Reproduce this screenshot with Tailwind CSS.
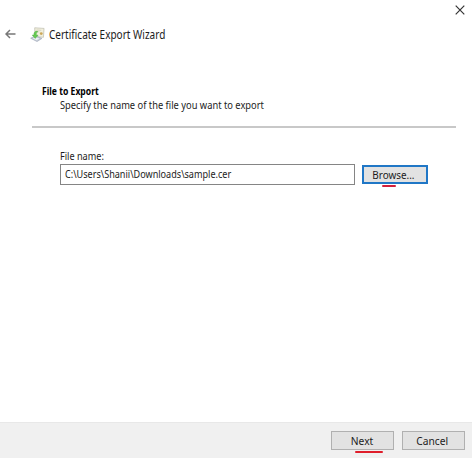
<!DOCTYPE html>
<html lang="en">
<head>
<meta charset="utf-8">
<title>Certificate Export Wizard</title>
<script src="https://cdn.jsdelivr.net/npm/@tailwindcss/browser@4"></script>
</head>
<body class="bg-white">
<main class="flex h-[459px] w-[474px] flex-col overflow-hidden bg-white font-['Noto_Sans','Open_Sans',sans-serif] text-[11px] leading-4 whitespace-nowrap text-[#1c1c1c]">
  <div class="flex h-[22px] justify-end pt-[5px] pr-[9px]">
    <svg class="size-[10px]" viewBox="0 0 10 10" fill="none" stroke="#333" stroke-width="1.2"><path d="M.7.7l8.6 8.6M9.3.7L.7 9.3"/></svg>
  </div>
  <header class="flex h-[26px] items-center pl-[5px]">
    <svg class="-mt-[2px] h-[10px] w-[11px]" viewBox="0 0 11 10" fill="none" stroke="#777" stroke-width="1.5"><path d="M10.5 5H1.2M5 1L1 5l4 4"/></svg>
    <svg class="-mt-[2px] ml-[14px] h-[15px] w-[15px]" viewBox="0 0 16 16">
      <path d="M5 .8l10 .7-.7 9.5-9-.8z" fill="#f1efdc" stroke="#b9b9a9" stroke-width=".7"/>
      <path d="M7 3.2l5 .3M7 5l3 .2" stroke="#c9c8b5" stroke-width=".8"/>
      <circle cx="12" cy="7" r="1.5" fill="#cba75a"/>
      <path d="M.7 12l5-2.6 7 2.8-5.2 3.3z" fill="#c7ced8" stroke="#929cae" stroke-width=".6"/>
      <path d="M3 12.2l3-1.4 4 1.5-3 1.8z" fill="#edf1f4"/>
      <path d="M7.5 4.3C5 4.5 4 6 4.1 8.6H2.3l3.3 3.6 3-3.6H6.7c0-2 .2-3 1.7-3.5z" fill="#65c952" stroke="#46a63b" stroke-width=".4"/>
    </svg>
    <h1 class="ml-[4px] origin-left scale-x-[.834] text-[12px]/4">Certificate Export Wizard</h1>
  </header>
  <section class="mt-[35px] h-[43px] pl-[42px]">
    <h2 class="origin-left scale-x-[.86] text-[10px] leading-[16px] font-bold text-black">File to Export</h2>
    <p class="-mt-[2px] pl-[18px]"><span class="inline-block origin-left scale-x-[.847]">Specify the name of the file you want to export</span></p>
  </section>
  <div class="ml-[32px] h-[2px] w-[424px] bg-[#c8c8c8]"></div>
  <section class="mt-[20px] pl-[60px]">
    <label for="filename" class="block origin-left scale-x-[.83]">File name:</label>
    <div class="flex">
      <div class="h-[21px] w-[295px] border border-[#858585] bg-white pl-1">
        <input id="filename" class="block h-[17px] w-[340px] origin-left scale-x-[.826] outline-none" value="C:\Users\Shanii\Downloads\sample.cer">
      </div>
      <button class="relative ml-[7px] mt-[1px] h-[19px] w-[66px] border-2 border-[#2077c6] bg-[#e2e2e2] pr-[3px] leading-[15px]"><span class="inline-block scale-x-[.9]">Browse...</span><span class="absolute top-[18px] left-[18px] h-[2px] w-[14px] rounded-full bg-[#d11e3b]"></span></button>
    </div>
  </section>
  <footer class="mt-auto mb-[1px] flex h-[36px] w-[472px] gap-2 border-t border-[#e8e8e8] bg-[#f0f0f0] pt-[8px] pl-[331px]">
    <button class="relative h-[19px] w-[63px] border border-[#b0b0b0] bg-[#e2e2e2] leading-[17px]"><span class="inline-block scale-x-[.93]">Next</span><span class="absolute top-[19px] left-[23px] h-[2px] w-[28px] rounded-full bg-[#df1e2b]"></span></button>
    <button class="h-[19px] w-[63px] border border-[#b0b0b0] bg-[#e2e2e2] pr-[2px] leading-[17px]"><span class="inline-block scale-x-[.93]">Cancel</span></button>
  </footer>
</main>
</body>
</html>
